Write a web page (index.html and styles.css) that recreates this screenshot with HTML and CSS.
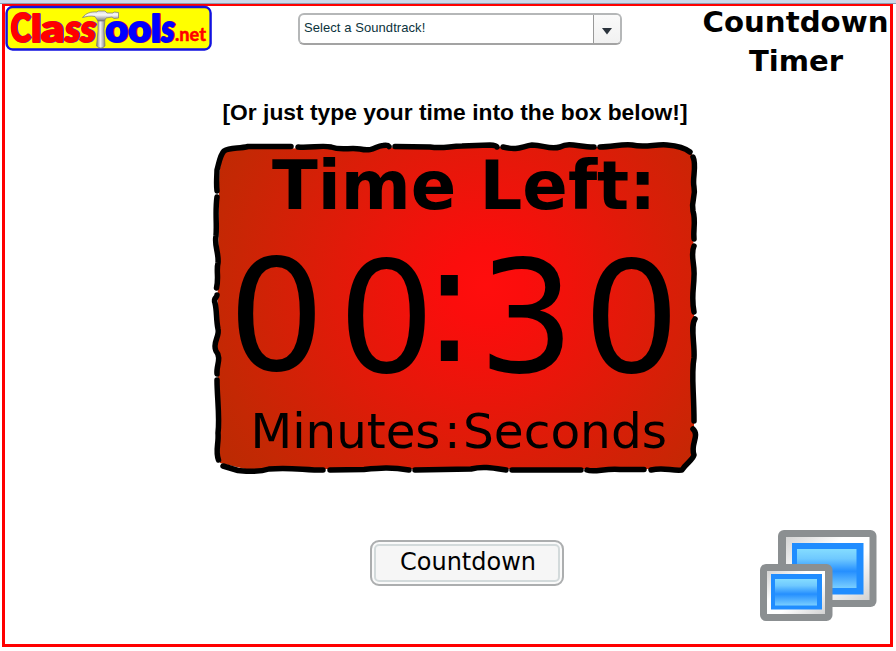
FILE: index.html
```
<!DOCTYPE html>
<html lang="en">
<head>
<meta charset="utf-8">
<title>Countdown Timer</title>
<link rel="stylesheet" href="styles.css">
</head>
<body>
<div class="strip"></div>
<main class="stage">
  <header class="top">
    <svg class="logo" width="208" height="46" viewBox="5 5 208 46" role="img" aria-label="ClassTools.net">
      <defs>
        <linearGradient id="steel" x1="0" x2="1"><stop offset="0" stop-color="#777"/><stop offset=".45" stop-color="#f4f4f4"/><stop offset="1" stop-color="#858585"/></linearGradient>
        <linearGradient id="head" x1="0" x2="0" y1="0" y2="1"><stop offset="0" stop-color="#ddd"/><stop offset=".4" stop-color="#f8f8f8"/><stop offset="1" stop-color="#777"/></linearGradient>
      </defs>
      <rect x="6.600" y="7" width="204" height="42.500" rx="6" fill="#ff0" stroke="#1212e0" stroke-width="2.400"/>
      <g class="brand brand-red">
        <text x="10.500" y="42" font-size="39" textLength="20" lengthAdjust="spacingAndGlyphs">C</text>
        <text x="31" y="42" font-size="37" textLength="10" lengthAdjust="spacingAndGlyphs">l</text>
        <text x="41" y="42" font-size="37" textLength="23" lengthAdjust="spacingAndGlyphs">a</text>
        <text class="slant" x="65" y="42" font-size="37" textLength="15" lengthAdjust="spacingAndGlyphs">s</text>
        <text class="slant" x="80.500" y="42" font-size="37" textLength="15" lengthAdjust="spacingAndGlyphs">s</text>
      </g>
      <g class="brand brand-blue">
        <text x="105.500" y="42" font-size="37" textLength="22.500" lengthAdjust="spacingAndGlyphs">o</text>
        <text x="128.500" y="42" font-size="37" textLength="22.500" lengthAdjust="spacingAndGlyphs">o</text>
        <text x="151" y="42" font-size="37" textLength="10" lengthAdjust="spacingAndGlyphs">l</text>
        <text class="slant" x="161.500" y="42" font-size="37" textLength="13" lengthAdjust="spacingAndGlyphs">s</text>
      </g>
      <text class="domain" x="175" y="41" font-size="18" textLength="31" lengthAdjust="spacingAndGlyphs">.net</text>
      <path d="M98 19 L105 19 L104 30 L105 46 Q101 50 96.500 46 L98 31 Z" fill="url(#steel)" stroke="#777" stroke-width=".7"/>
      <path d="M82.500 17.500 C86 13 91 11.500 97 12 L98 11 L105 11 L107 13 L113 13 L114 12 L118.500 12.500 L118.500 18 L114 18.500 L112 17 L106 18 L104 21 L98 21 L95 16.500 C90 15.500 87 16.500 82.500 17.500 Z" fill="url(#head)" stroke="#777" stroke-width=".7"/>
    </svg>
    <div class="combo">
      <span class="combo-value">Select a Soundtrack!</span>
      <span class="combo-button"><svg width="10" height="7" viewBox="0 0 10 7"><path d="M0 0H10L5 6.500Z" fill="#2b333c"/></svg></span>
    </div>
    <h1 class="title">
      <svg width="190" height="78" viewBox="701 5 190 78">
        <text x="703.500" y="32" textLength="186" lengthAdjust="spacingAndGlyphs">Countdown</text>
        <text x="750" y="71" textLength="94" lengthAdjust="spacingAndGlyphs">Timer</text>
      </svg>
    </h1>
  </header>

  <svg class="prompt" width="480" height="40" viewBox="215 93 480 40">
    <text x="222.500" y="120" textLength="465" lengthAdjust="spacingAndGlyphs">[Or just type your time into the box below!]</text>
  </svg>

  <svg class="clock" width="490" height="340" viewBox="210 137 490 340">
    <defs>
      <radialGradient id="glow" gradientUnits="userSpaceOnUse" cx="486" cy="285" r="310">
        <stop offset="0" stop-color="#ff0d0d"/><stop offset=".12" stop-color="#fb0d0c"/><stop offset=".4" stop-color="#e7170a"/><stop offset=".88" stop-color="#c42804"/><stop offset="1" stop-color="#bd2a03"/>
      </radialGradient>
    </defs>
    <path d="M219 192 C219 166 221 149 232 149 L450 147 L672 147 L692 153 L694 280 L694 455 L681 469 L245 469 L220 463 L217 350 Z" fill="url(#glow)"/>
    <g class="edge">
      <path d="M217 191 C216 182 217 176 217 170 C219 163 220 155 224 151 C230 147 239 149 248 146.500 L291 146.500"/>
      <path d="M298 147 C311 148 322 145 331 147 C342 151 350 147 360 149 C374 152 375 146 383 145.500 C386 145 388 145 389 146.500"/>
      <path d="M395 146.500 L430 147 C444 149 449 146 462 146 L490 145 Q496 145 497 147"/>
      <path d="M503 147 C519 151 522 146 532 145 C544 145 549 150 560 147 C570 142 578 147 594 147"/>
      <path d="M600 147 C613 147 620 144 632 145 C645 148 655 144 667 145 C679 146 685 148 690 152"/>
      <path d="M693 157 C697 165 692 179 694 187 C696 197 691 199 693 211 C696 221 693 229 694 239"/>
      <path d="M694 246 C690 255 695 264 694 276 C694 288 691 297 694 312"/>
      <path d="M695 319 C690 326 695 344 694 358 C691 374 694 391 694 421"/>
      <path d="M693 429 C700 436 690 444 694 455 C693 460 686 463 682 470 C671 471 664 467 651 470"/>
      <path d="M644 469.500 L620 469.500 C605 468 594 473 587 470"/>
      <path d="M581 470 L512 470"/>
      <path d="M506 470 C493 468 483 466 471 469 L415 470"/>
      <path d="M409 470 C391 467 380 468 364 469.500 L330 470"/>
      <path d="M323 470 C304 470 289 467 269 469 C257 473 244 471 238 470.500 L223 466"/>
      <path d="M218.500 460 C215 451 219 443 218 433 C220 418 217 397 217 380"/>
      <path d="M217 374 C216 366 222 358 216 351 C212 343 220 336 218 329 C216 319 217 311 215 303 C213 298 217 298 217 295"/>
      <path d="M216.500 288 C219 278 216 270 218 263 C219 253 214 245 216 236 C217 224 215 211 217 197"/>
    </g>
    <text class="caption" x="272" y="209" textLength="384" lengthAdjust="spacingAndGlyphs">Time Left:</text>
    <g class="digits">
      <text x="228" y="369.500" textLength="97" lengthAdjust="spacingAndGlyphs">0</text>
      <text x="338" y="372" textLength="97" lengthAdjust="spacingAndGlyphs">0</text>
      <text class="colon" x="421.500" y="361">:</text>
      <text x="478" y="372" textLength="97" lengthAdjust="spacingAndGlyphs">3</text>
      <text x="583" y="372" textLength="97" lengthAdjust="spacingAndGlyphs">0</text>
    </g>
    <text class="units" x="250.500" y="447.500" textLength="190" lengthAdjust="spacingAndGlyphs">Minutes</text>
    <text class="units" x="444" y="447.500">:</text>
    <text class="units" x="463" y="447.500" textLength="204" lengthAdjust="spacingAndGlyphs">Seconds</text>
  </svg>

  <footer class="bottom">
    <button class="start" type="button">
      <svg width="150" height="38" viewBox="0 0 150 38"><text x="7" y="25" textLength="136" lengthAdjust="spacingAndGlyphs">Countdown</text></svg>
    </button>
    <svg class="screens" width="118" height="92" viewBox="759 529 118 92">
      <defs>
        <linearGradient id="screen" x1="0" x2="0" y1="0" y2="1"><stop offset="0" stop-color="#84dcff"/><stop offset=".25" stop-color="#6fc9ff"/><stop offset=".57" stop-color="#258fff"/><stop offset="1" stop-color="#79ceff"/></linearGradient>
        <linearGradient id="bezel" x1="0" x2="1" y1="0" y2="1"><stop offset="0" stop-color="#d4d4d4"/><stop offset=".15" stop-color="#e5e5e5"/><stop offset=".35" stop-color="#fff"/><stop offset=".6" stop-color="#fff"/><stop offset="1" stop-color="#d2d2d2"/></linearGradient>
      </defs>
      <rect x="778" y="530" width="98.500" height="77" rx="6" fill="#8b8f91"/>
      <rect x="786" y="537" width="83.500" height="63" fill="url(#bezel)"/>
      <rect x="792" y="543" width="71.500" height="51.500" fill="#208dff"/>
      <rect x="797" y="549" width="59.500" height="39" fill="url(#screen)"/>
      <rect x="760" y="564" width="72.500" height="57" rx="6" fill="#8b8f91"/>
      <rect x="767" y="571" width="58" height="43" fill="url(#bezel)"/>
      <rect x="771" y="574" width="51" height="35.500" fill="#208dff"/>
      <rect x="775" y="579" width="42" height="26.500" fill="url(#screen)"/>
    </svg>
  </footer>
</main>
</body>
</html>
```
FILE: styles.css
```
* { box-sizing: border-box; }

body {
  margin: 0;
  height: 651px;
  overflow: hidden;
  background: #fff;
  color: #000;
  font-family: "DejaVu Sans", sans-serif;
}

svg { display: block; flex: none; }

.strip {
  height: 4px;
  background: #ccd9ea;
  border-bottom: 1px solid #8e9bb0;
}

.stage {
  display: flex;
  flex-direction: column;
  width: 891px;
  height: 643px;
  margin-left: 2px;
  border: 3px solid #f00;
  border-top-width: 2px;
}

.top {
  display: flex;
  align-items: flex-start;
  height: 87px;
}

.logo { margin-top: -1px; }

.brand {
  font-family: Lato, sans-serif;
  font-weight: 900;
  stroke-width: 2px;
  stroke-linejoin: round;
}
.slant { font-style: italic; }
.brand-red {
  fill: #f00;
  stroke: #f00;
  filter: drop-shadow(1px .6px 0 #5131d8);
}
.brand-blue {
  fill: #00f;
  stroke: #00f;
  filter: drop-shadow(1px .6px 0 #e00040);
}
.domain {
  font-family: Lato, sans-serif;
  font-weight: 900;
  fill: #f00;
  stroke: #f00;
  stroke-width: .4px;
}

.combo {
  display: flex;
  width: 325px;
  height: 32px;
  margin: 7px 0 0 85px;
  border: 2px solid #b5b7b8;
  border-bottom-color: #a3a3a3;
  border-radius: 6px;
  overflow: hidden;
}
.combo-value {
  flex: 1;
  padding-left: 4px;
  color: #0b333c;
  font: 13px/26px "Liberation Sans", sans-serif;
  letter-spacing: .07px;
}
.combo-button {
  display: flex;
  align-items: center;
  justify-content: center;
  width: 27px;
  padding-top: 4px;
  border-left: 1px solid #999;
  background: linear-gradient(#fafafa, #f1f1f1);
}

.title {
  margin: -1px 0 0 78px;
  font-size: 29px;
  font-weight: bold;
}

.prompt {
  margin-left: 210px;
  font: bold 22px "Liberation Sans", sans-serif;
}

.clock { margin: 4px 0 0 205px; }
.edge {
  fill: none;
  stroke: #000;
  stroke-width: 5.5px;
  stroke-linecap: round;
  stroke-linejoin: round;
}
.caption { font-size: 68px; font-weight: bold; }
.digits { font-size: 155px; }
.colon { font-size: 165px; }
.units { font-size: 48px; }

.bottom {
  display: flex;
  align-items: flex-start;
  padding: 52px 0 0 365px;
}
.start {
  display: flex;
  align-items: flex-start;
  width: 194px;
  height: 46px;
  margin-top: 11px;
  padding: 3px 0 0 21px;
  border: 2px solid #acaeaf;
  border-radius: 9px;
  background: #f6f6f6;
  box-shadow: inset 0 0 0 2px #fafafa, inset 0 0 0 4px #d3dadb;
  font: 25px "DejaVu Sans", sans-serif;
}
.screens { margin-left: 195px; }
```
